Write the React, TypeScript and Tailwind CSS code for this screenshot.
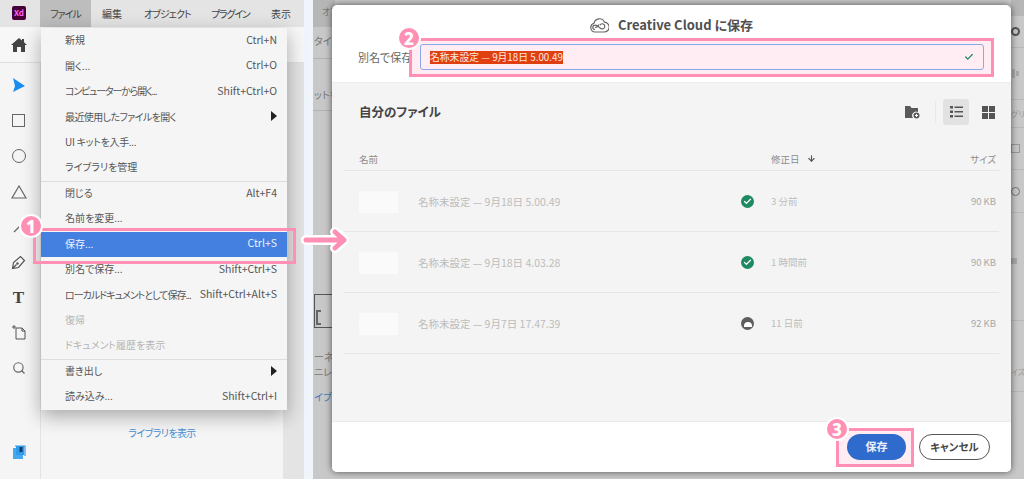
import React from 'react';
import { Search, Check, ArrowDown } from 'lucide-react';

const font = "font-['Noto_Sans_CJK_JP','Noto_Sans',sans-serif] [font-feature-settings:'palt']";

type MenuRow = { label: string; key?: string; arrow?: boolean; off?: boolean; active?: boolean; line?: boolean; track?: string };

const menuRows: MenuRow[] = [
  { label: '新規', key: 'Ctrl+N' },
  { label: '開く...', key: 'Ctrl+O' },
  { label: 'コンピューターから開く...', key: 'Shift+Ctrl+O', track: 'tracking-[-1.2px]' },
  { label: '最近使用したファイルを開く', arrow: true, track: 'tracking-[-0.6px]' },
  { label: 'UI キットを入手...', track: 'tracking-[-0.3px]' },
  { label: 'ライブラリを管理' },
  { label: '閉じる', key: 'Alt+F4', line: true },
  { label: '名前を変更...' },
  { label: '保存...', key: 'Ctrl+S', active: true },
  { label: '別名で保存...', key: 'Shift+Ctrl+S' },
  { label: 'ローカルドキュメントとして保存...', key: 'Shift+Ctrl+Alt+S', track: 'tracking-[-1px]' },
  { label: '復帰', off: true },
  { label: 'ドキュメント履歴を表示', off: true },
  { label: '書き出し', arrow: true, line: true },
  { label: '読み込み...', key: 'Shift+Ctrl+I' },
];

const files = [
  { name: '名称未設定 — 9月18日 5.00.49', date: '3 分前', size: '90 KB', synced: true },
  { name: '名称未設定 — 9月18日 4.03.28', date: '1 時間前', size: '90 KB', synced: true },
  { name: '名称未設定 — 9月7日 17.47.39', date: '11 日前', size: '92 KB', synced: false },
];

function Badge({ n, className }: { n: string; className: string }) {
  return (
    <div className={`absolute flex h-[24px] w-[24px] items-center justify-center rounded-full border-2 border-white bg-[#ff8fb3] font-['Noto_Sans',sans-serif] text-[17px] font-extrabold leading-none text-white ${className}`}>
      {n}
    </div>
  );
}

function ToolSlot({ children }: { children: React.ReactNode }) {
  return <div className="flex h-[35.3px] shrink-0 items-center justify-center">{children}</div>;
}

function ToolIcons() {
  return (
    <div className="flex w-[41px] shrink-0 flex-col border-r border-[#e4e4e4] bg-[#f5f5f5] pr-[3px] pt-[5px]">
      <ToolSlot>
        <svg width="14" height="16" viewBox="0 0 14 16"><path d="M1 0l12 8-12 6 2-6z" fill="#1a8cf0" /></svg>
      </ToolSlot>
      <ToolSlot>
        <div className="h-[13px] w-[13px] border-[1.5px] border-[#666]" />
      </ToolSlot>
      <ToolSlot>
        <div className="h-[14px] w-[14px] rounded-full border-[1.5px] border-[#666]" />
      </ToolSlot>
      <ToolSlot>
        <svg width="16" height="14" viewBox="0 0 16 14"><path d="M8 1l7 12H1z" fill="none" stroke="#666" strokeWidth="1.2" /></svg>
      </ToolSlot>
      <ToolSlot>
        <svg width="14" height="14" viewBox="0 0 14 14"><path d="M2 12L8 6" stroke="#666" strokeWidth="1.2" /></svg>
      </ToolSlot>
      <ToolSlot>
        <svg width="15" height="15" viewBox="0 0 15 15"><path d="M1.500 13.500l1-6L9.500 1.500l4 4-6 7zM1.500 13.500l4-4" fill="none" stroke="#555" strokeWidth="1.2" /><circle cx="6.500" cy="8.500" r="1.200" fill="#555" /></svg>
      </ToolSlot>
      <ToolSlot>
        <span className="font-['Liberation_Serif',serif] text-[17px] font-bold leading-[15px] text-[#444]">T</span>
      </ToolSlot>
      <ToolSlot>
        <svg width="16" height="15" viewBox="0 0 16 15"><path d="M5 3h6l3 3v8H5zM11 3v3h3M1 2h4M3 0v4" fill="none" stroke="#555" strokeWidth="1" /></svg>
      </ToolSlot>
      <ToolSlot>
        <Search size={14} color="#666" />
      </ToolSlot>
      <div className="mt-[59px] flex justify-center">
        <svg width="14" height="15" viewBox="0 0 14 15"><path d="M1 3h10v11H1z" fill="#46a8f0" /><path d="M3 1h10v10" fill="none" stroke="#2f9bec" strokeWidth="1.2" /><path d="M4 1h8v9H4z" fill="#2f9bec" /><path d="M7.500 2h3v5h-3z" fill="#0f3d66" /></svg>
      </div>
    </div>
  );
}

function XdApp() {
  return (
    <div className="flex h-full w-[304px] shrink-0 flex-col bg-[#e4e4e4]">
      <div className="flex h-[27px] shrink-0 items-center whitespace-nowrap bg-[#e4e4e4] pb-[1px] text-[10px] text-[#444]">
        <div className="ml-[12px] mr-[14px] flex h-[14px] w-[14px] items-center justify-center rounded-[2px] bg-[#470137] text-[8px] font-bold text-[#ff61f6]">Xd</div>
        <div className="-mb-[1px] flex h-[27px] w-[51px] items-center justify-center bg-[#bdbdbd] tracking-[-1px]">ファイル</div>
        <div className="ml-[11px] w-[42px]">編集</div>
        <div className="w-[67px] tracking-[-1px]">オブジェクト</div>
        <div className="w-[60px] tracking-[-1.2px]">プラグイン</div>
        <div>表示</div>
      </div>
      <div className="flex h-[36px] shrink-0 items-center border-b border-[#e0e0e0] bg-[#f7f7f7] pl-[11px]">
        <svg width="16" height="14" viewBox="0 0 16 14"><path d="M8 0l3 2.500V1h2v3.200L16 7h-2v7h-4V9H6v5H2V7H0z" fill="#444" /></svg>
      </div>
      <div className="flex min-h-0 flex-1">
        <ToolIcons />
        <div className="flex w-[242px] shrink-0 items-end justify-center bg-[#f5f5f5] pb-[39px]">
          <span className="text-[10px] tracking-[-0.6px] text-[#4a8fd4]">ライブラリを表示</span>
        </div>
      </div>
    </div>
  );
}

function FileMenu() {
  return (
    <div className="absolute left-[41px] top-[28px] flex w-[246px] flex-col bg-[#f5f5f5] shadow-[0_6px_18px_rgba(0,0,0,0.32)]">
      {menuRows.map((r) => (
        <div
          key={r.label}
          className={`flex h-[25.45px] items-center justify-between pb-[2px] pl-[24px] pr-[10px] text-[10px] ${r.line ? 'border-t border-[#dedede]' : ''} ${r.active ? 'bg-[#4480e0] text-[#eef3fb]' : r.off ? 'text-[#b5b5b5]' : 'text-[#555]'}`}
        >
          <span className={`whitespace-nowrap ${r.track ?? ''}`}>{r.label}</span>
          {r.key && <span className="whitespace-nowrap text-[10.5px]">{r.key}</span>}
          {r.arrow && (
            <svg width="6" height="10" viewBox="0 0 6 10"><path d="M0 0l6 5-6 5z" fill="#222" /></svg>
          )}
        </div>
      ))}
    </div>
  );
}

function DimmedBackground() {
  return (
    <div className="flex h-full flex-1 overflow-hidden bg-[#c8c8c8] text-[10px] text-[#777]">
      <div className="w-[22px] shrink-0">
        <div className="h-[27px] whitespace-nowrap bg-[#b6b6b6] pl-[9px] pt-[5px] text-[9px]">オブ</div>
        <div className="h-[32px] whitespace-nowrap border-b border-[#b2b2b2] pl-[1px] pt-[6px]">タイ</div>
        <div className="h-[52px] whitespace-nowrap border-b border-[#b2b2b2] pl-[1px] pt-[28px]">ットを</div>
        <div className="ml-[1px] mt-[183px] h-[34px] w-[30px] border-y border-l border-[#555]">
          <div className="ml-[1px] mt-[15px] h-[15px] w-[5px] border-y-2 border-l-2 border-[#666]" />
        </div>
        <div className="mt-[21px] whitespace-nowrap pl-[1px] leading-[15px]">
          <div>ーネン</div>
          <div>ニレメン</div>
          <div className="mt-[10px] text-[#3f7fc0]">イブラ</div>
        </div>
      </div>
      <div className="flex-1" />
      <div className="flex w-[13px] shrink-0 flex-col text-[8px] text-[#999]">
        <div className="h-[16px] bg-[#b6b6b6]" />
        <div className="flex h-[32px] items-center border-b border-[#b8b8b8]">
          <div className="h-[9px] w-[9px] rounded-full border-2 border-[#555]" />
        </div>
        <div className="flex h-[52px] items-center gap-[1px] border-b border-[#b8b8b8] pl-[1px]">
          <div className="h-[9px] w-[3px] bg-[#aaa]" />
          <div className="h-[5px] w-[3px] bg-[#aaa]" />
        </div>
        <div className="flex h-[28px] items-center whitespace-nowrap border-b border-[#b8b8b8]">グリ</div>
        <div className="flex h-[42px] items-center border-b border-[#b8b8b8]">
          <div className="h-[9px] w-[9px] border border-[#999]" />
        </div>
        <div className="flex h-[43px] items-center border-b border-[#b8b8b8]">
          <div className="h-[9px] w-[9px] rounded-full border border-[#777]" />
        </div>
        <div className="flex h-[108px] items-start border-b border-[#b8b8b8] pt-[45px]">
          <div className="h-[6px] w-[6px] bg-[#aaa]" />
        </div>
        <div className="flex h-[71px] items-end whitespace-nowrap border-b border-[#b8b8b8] pb-[13px]">イズ</div>
      </div>
    </div>
  );
}

function FileRow({ f }: { f: (typeof files)[number] }) {
  return (
    <div className="flex h-[61px] items-center border-b border-[#e6e6e6] pr-[3px] pt-[1px] text-[9.5px] text-[#bcbcbc]">
      <div className="ml-[15px] h-[22px] w-[39px] bg-[#fafafa]" />
      <div className="ml-[20px] w-[323px] text-[10.5px]">{f.name}</div>
      {f.synced ? (
        <div className="flex h-[13px] w-[13px] items-center justify-center rounded-full bg-[#1f8a62]">
          <Check size={9} color="#fff" strokeWidth={3.5} />
        </div>
      ) : (
        <div className="flex h-[13px] w-[13px] items-center justify-center rounded-full bg-[#5e5e5e]">
          <div className="mt-[2px] h-[5px] w-[8px] rounded-t-full bg-white" />
        </div>
      )}
      <div className="ml-[17px] w-[120px]">{f.date}</div>
      <div className="flex-1 text-right text-[#a8a8a8]">{f.size}</div>
    </div>
  );
}

function SaveDialog() {
  return (
    <div className="absolute left-[332px] top-[5px] flex h-[467px] w-[679px] flex-col overflow-hidden rounded-[5px] bg-white shadow-[0_0_7px_rgba(0,0,0,0.6)]">
      <div className="h-[78px] shrink-0 border-b border-[#ececec]">
        <div className="flex h-[39px] items-center justify-center gap-[9px] pt-[1px] text-[13px] font-semibold text-[#505050]">
          <svg width="19" height="15" viewBox="0 0 19 15" fill="none" stroke="#666" strokeWidth="1.2">
            <path d="M5 14a4.500 4.500 0 0 1-1-8.800 5.500 5.500 0 0 1 10.500-1 4.800 4.800 0 0 1-.5 9.800z" />
            <path d="M5 11.500a2.200 2.200 0 0 1 0-4.400c2.500-.3 3.500 2 5 3 2 1.500 5 .8 4.800-2a2.500 2.500 0 0 0-4.800-.8" />
            <path d="M5 9.500c1 0 3-1 4-3" />
          </svg>
          <span>Creative Cloud に保存</span>
        </div>
        <div className="flex items-center pl-[26px]">
          <span className="w-[62px] whitespace-nowrap text-[11px] text-[#666]">別名で保存</span>
          <div className="relative h-[26px] w-[564px]">
            <div className="absolute -bottom-[7px] -left-[11px] -right-[10px] -top-[6px] border-[3px] border-[#ff8fb3] bg-[#ffedf3]" />
            <div className="relative flex h-full items-center justify-between rounded-[3px] border border-[#8aa8ec] pl-[9px] pr-[9px]">
              <span className="bg-[#e0400f] text-[9.8px] leading-[13px] text-[#ffe9e0]">名称未設定 — 9月18日 5.00.49</span>
              <Check size={10} color="#1f8a62" strokeWidth={3} />
            </div>
          </div>
        </div>
      </div>
      <div className="flex min-h-0 flex-1 flex-col bg-[#f4f4f4] px-[12px]">
        <div className="flex h-[55px] shrink-0 items-center justify-between pr-[4px] pt-[3px]">
          <span className="ml-[15px] text-[12.5px] font-bold text-[#444]">自分のファイル</span>
          <div className="flex items-center">
            <svg width="15" height="14" viewBox="0 0 15 14"><path d="M0 1h5l1.500 2H13v4a4 4 0 0 0-5 6H0z" fill="#5a5a5a" /><circle cx="11.500" cy="10.500" r="3" fill="#5a5a5a" /><path d="M11.500 9v3M10 10.500h3" stroke="#fff" /></svg>
            <div className="ml-[15px] mr-[7px] h-[22px] w-px bg-[#e8e8e8]" />
            <div className="flex h-[26px] w-[26px] items-center justify-center rounded-[3px] bg-[#e2e2e2]">
              <svg width="13" height="12" viewBox="0 0 13 12" fill="#555"><path d="M0 0h3v2.500H0zM4.500.5H13V2H4.500zM0 4.500h3V7H0zM4.500 5H13v1.500H4.500zM0 9h3v2.500H0zM4.500 9.500H13V11H4.500z" /></svg>
            </div>
            <svg className="ml-[13px]" width="13" height="13" viewBox="0 0 13 13" fill="#555"><path d="M0 0h6v6H0zM7 0h6v6H7zM0 7h6v6H0zM7 7h6v6H7z" /></svg>
          </div>
        </div>
        <div className="flex h-[33px] shrink-0 items-end border-b border-[#e6e6e6] pb-[4px] pr-[3px] text-[9.5px] text-[#8c8c8c]">
          <span className="ml-[15px] w-[412px]">名前</span>
          <span className="flex items-center gap-[7px]">
            修正日 <ArrowDown size={9} color="#555" strokeWidth={3} />
          </span>
          <span className="flex-1 text-right">サイズ</span>
        </div>
        {files.map((f) => (
          <FileRow key={f.name} f={f} />
        ))}
      </div>
      <div className="flex h-[51px] shrink-0 items-center justify-end gap-[13px] border-t border-[#eaeaea] bg-white pb-[2px] pr-[21px] pt-[1px]">
        <div className="relative h-[26px] w-[59px]">
          <div className="absolute -bottom-[7px] -left-[11px] -right-[8px] -top-[6px] border-[3px] border-[#ff8fb3] bg-[#ffedf3]" />
          <div className="relative flex h-full items-center justify-center rounded-full bg-[#2f6bcd] text-[11px] font-bold text-[#eef3fb]">保存</div>
        </div>
        <div className="flex h-[26px] w-[71px] items-center justify-center rounded-full border-[1.5px] border-[#555] text-[10.5px] font-bold text-[#444]">キャンセル</div>
      </div>
    </div>
  );
}

export default function App() {
  return (
    <div className={`relative flex h-[479px] w-[1024px] overflow-hidden bg-[#eff5fb] ${font}`}>
      <XdApp />
      <div className="w-[9px] shrink-0" />
      <DimmedBackground />
      <FileMenu />
      <SaveDialog />

      {/* callouts on top of the screenshots */}
      <div className="absolute left-[33px] top-[228px] h-[36px] w-[263px] border-[3px] border-[#ff8fb3]" />
      <Badge n="1" className="left-[19px] top-[214px]" />
      <Badge n="2" className="left-[397px] top-[26px]" />
      <Badge n="3" className="left-[825px] top-[417px]" />
      <svg className="absolute left-[301px] top-[227px]" width="50" height="26" viewBox="0 0 50 26">
        <path d="M5 13h38M34 5l9 8-9 8" fill="none" stroke="#fff" strokeWidth="10" strokeLinecap="round" strokeLinejoin="round" />
        <path d="M5 13h38M34 5l9 8-9 8" fill="none" stroke="#ff8fb3" strokeWidth="5" strokeLinecap="round" strokeLinejoin="round" />
      </svg>
    </div>
  );
}
